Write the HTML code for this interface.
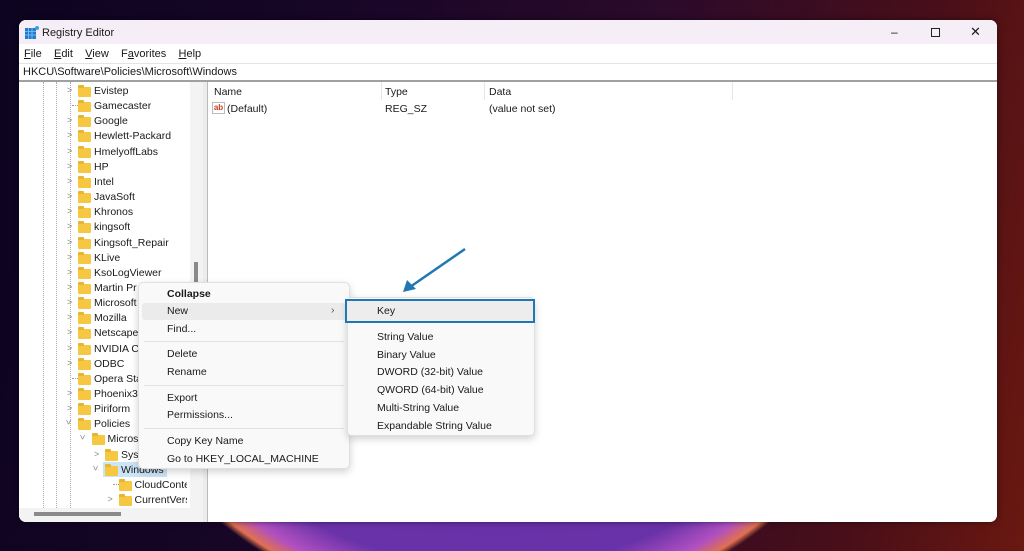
<!DOCTYPE html>
<html><head><meta charset="utf-8"><style>
*{margin:0;padding:0;box-sizing:border-box}
body{width:1024px;height:551px;overflow:hidden;position:relative;font-family:"Liberation Sans",sans-serif;font-size:10.5px;color:#1a1a1a;
background:linear-gradient(100deg,#0c0420 0%,#1a0628 35%,#2c0a2a 60%,#4a0f18 85%,#6a1810 100%);}
.swoosh{position:absolute;left:0;top:500px;width:1024px;height:51px;
background:radial-gradient(circle 436px at 495px -316px,#5a2a9a 0%,#6a32a8 88%,#b050c0 95%,#e07050 98.5%,rgba(200,70,60,0) 100%);}
.a{position:absolute;white-space:nowrap}
.win{position:absolute;left:19px;top:20px;width:978px;height:502px;background:#fff;border-radius:7px;overflow:hidden;box-shadow:0 0 6px rgba(0,0,0,.5)}
.title{position:absolute;left:0;top:0;width:100%;height:24px;background:#f6eef6}
.fold{position:absolute;width:13px;height:10px;background:#f6c842;border-radius:1px}
.fold:before{content:"";position:absolute;left:0;top:-2px;width:6px;height:3px;background:#e8b530;border-radius:1px 1px 0 0}
.chev{position:absolute;color:#888;font-size:9px}
.mi{position:absolute;left:167px}
</style></head><body>
<div class="swoosh"></div>
<div class="win">
 <div class="title"></div>
 <svg class="a" style="left:6px;top:6px" width="14" height="14"><rect x="0" y="2" width="11" height="11" fill="#1f7dd0"/><path d="M3.5 2v11M7 2v11M0 5.5h11M0 9h11" stroke="#8cc4f0" stroke-width=".8"/><circle cx="12" cy="2" r="2" fill="#3aa0e8"/></svg>
 <div class="a" style="left:23px;top:7px;font-size:11px">Registry Editor</div>
 <div class="a" style="left:872px;top:5px;font-size:12px">–</div>
 <div class="a" style="left:912px;top:8px;width:9px;height:9px;border:1px solid #222"></div>
 <div class="a" style="left:951px;top:4px;font-size:13px">✕</div>
 <div class="a" style="left:5px;top:28px;font-size:11px"><u>F</u>ile&nbsp;&nbsp;&nbsp; <u>E</u>dit&nbsp;&nbsp;&nbsp; <u>V</u>iew&nbsp;&nbsp;&nbsp; F<u>a</u>vorites&nbsp;&nbsp;&nbsp; <u>H</u>elp</div>
 <div class="a" style="left:0;top:43px;width:100%;height:1px;background:#e4e4e4"></div>
 <div class="a" style="left:4px;top:46px;font-size:11px">HKCU\Software\Policies\Microsoft\Windows</div>
 <div class="a" style="left:0;top:60px;width:100%;height:2px;background:#a0a0a0"></div>
 <div class="a" style="left:171px;top:62px;width:13px;height:440px;background:#f3f3f3"></div>
 <div class="a" style="left:175px;top:242px;width:4px;height:23px;background:#8a8a8a"></div>
 <div class="a" style="left:184px;top:62px;width:5px;height:440px;background:#ececec;border-right:1px solid #bbb"></div>
 <div class="a" style="left:0;top:488px;width:171px;height:14px;background:#f3f3f3"></div>
 <div class="a" style="left:15px;top:492px;width:87px;height:4px;background:#8a8a8a"></div>
 <div class="a" style="left:24px;top:62px;border-left:1px dotted #aaa;height:426px"></div>
 <div class="a" style="left:37px;top:62px;border-left:1px dotted #aaa;height:426px"></div>
 <div class="a" style="left:51px;top:62px;border-left:1px dotted #aaa;height:426px"></div>
 <div class="a" style="left:362px;top:62px;width:1px;height:18px;background:#e6e6e6"></div>
 <div class="a" style="left:465px;top:62px;width:1px;height:18px;background:#e6e6e6"></div>
 <div class="a" style="left:713px;top:62px;width:1px;height:18px;background:#e6e6e6"></div>
</div>
<div class="a" style="left:214px;top:86px">Name</div>
<div class="a" style="left:385px;top:86px">Type</div>
<div class="a" style="left:489px;top:86px">Data</div>
<div class="a" style="left:212px;top:102px;width:13px;height:12px;border:1px solid #bbb;background:#fff;color:#d03a1a;font-size:8px;font-weight:bold;line-height:9px;text-align:center">ab</div>
<div class="a" style="left:227px;top:103px">(Default)</div>
<div class="a" style="left:385px;top:103px">REG_SZ</div>
<div class="a" style="left:489px;top:103px">(value not set)</div>

<div id="tree"></div>
<script>
var items=[["Evistep",0,1],["Gamecaster",0,0],["Google",0,1],["Hewlett-Packard",0,1],["HmelyoffLabs",0,1],["HP",0,1],["Intel",0,1],["JavaSoft",0,1],["Khronos",0,1],["kingsoft",0,1],["Kingsoft_Repair",0,1],["KLive",0,1],["KsoLogViewer",0,1],["Martin Pr",0,1],["Microsoft",0,1],["Mozilla",0,1],["Netscape",0,1],["NVIDIA C",0,1],["ODBC",0,1],["Opera Sta",0,0],["Phoenix3",0,1],["Piriform",0,1],["Policies",0,2],["Micros",1,2],["Sys",2,1],["Windows",2,2],["CloudConte",3,0],["CurrentVersi",3,1]];
var h="";
items.forEach(function(it,i){var y=84+i*15.15,x=78+it[1]*13.5;
if(it[2]==1)h+='<div class="chev a" style="left:'+(x-11)+'px;top:'+(y+1)+'px">&gt;</div>';
else if(it[2]==2)h+='<div class="chev a" style="left:'+(x-12)+'px;top:'+(y)+'px;transform:rotate(90deg)">&gt;</div>';
else h+='<div class="a" style="left:'+(x-6)+'px;top:'+(y+6)+'px;width:6px;border-top:1px dotted #999"></div>';
if(it[0]=="Windows")h+='<div class="a" style="left:'+(x-2)+'px;top:'+(y-1)+'px;width:64px;height:15px;background:#cce4f7"></div>';
h+='<div class="fold" style="left:'+x+'px;top:'+(y+3)+'px"></div><div class="a" style="left:'+(x+16)+'px;top:'+(y+1)+'px;max-width:'+(187-x-16)+'px;overflow:hidden">'+it[0]+'</div>';});
document.getElementById("tree").innerHTML=h;
</script>

<div class="a" style="left:138px;top:282px;width:212px;height:187px;background:#f9f9f9;border:1px solid #e0e0e0;border-radius:5px;box-shadow:0 3px 8px rgba(0,0,0,.18)"></div>
<div class="a" style="left:142px;top:303px;width:204px;height:17px;background:#ebebeb;border-radius:3px"></div>
<div class="mi a" style="top:288px;font-weight:bold">Collapse</div>
<div class="mi a" style="top:305px">New</div>
<div class="a" style="left:331px;top:304px;color:#555">›</div>
<div class="mi a" style="top:323px">Find...</div>
<div class="a" style="left:144px;top:341px;width:200px;height:1px;background:#e2e2e2"></div>
<div class="mi a" style="top:348px">Delete</div>
<div class="mi a" style="top:366px">Rename</div>
<div class="a" style="left:144px;top:385px;width:200px;height:1px;background:#e2e2e2"></div>
<div class="mi a" style="top:392px">Export</div>
<div class="mi a" style="top:409px">Permissions...</div>
<div class="a" style="left:144px;top:428px;width:200px;height:1px;background:#e2e2e2"></div>
<div class="mi a" style="top:435px">Copy Key Name</div>
<div class="mi a" style="top:453px">Go to HKEY_LOCAL_MACHINE</div>

<div class="a" style="left:347px;top:297px;width:188px;height:139px;background:#f9f9f9;border:1px solid #e0e0e0;border-radius:5px;box-shadow:0 3px 8px rgba(0,0,0,.18)"></div>
<div class="a" style="left:345px;top:299px;width:190px;height:24px;border:2px solid #1f78b4;background:#ededed"></div>
<div class="a" style="left:377px;top:305px">Key</div>
<div class="a" style="left:377px;top:331px">String Value</div>
<div class="a" style="left:377px;top:349px">Binary Value</div>
<div class="a" style="left:377px;top:366px">DWORD (32-bit) Value</div>
<div class="a" style="left:377px;top:384px">QWORD (64-bit) Value</div>
<div class="a" style="left:377px;top:402px">Multi-String Value</div>
<div class="a" style="left:377px;top:420px">Expandable String Value</div>
<svg class="a" style="left:0;top:0" width="1024" height="551"><path d="M465 249L410 287" stroke="#1f78b4" stroke-width="2.5"/><path d="M403 292L407 280L416 289Z" fill="#1f78b4"/></svg>
</body></html>
